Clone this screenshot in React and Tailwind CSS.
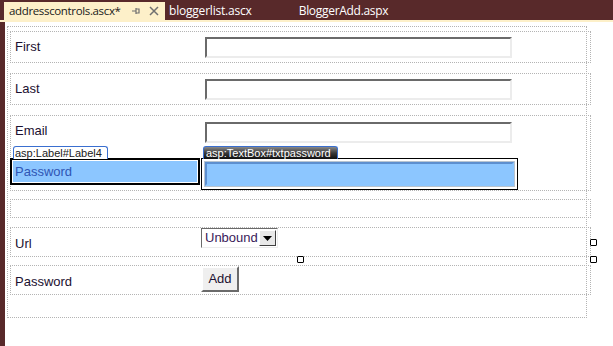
import React from "react";

const Sunken = ({ className = "" }) => (
  <div
    className={`h-[21px] w-[307px] border-2 border-t-[#6a6a6a] border-l-[#6a6a6a] border-b-[#ececec] border-r-[#ececec] bg-white ${className}`}
  />
);

const Handle = ({ className }) => (
  <div className={`absolute h-[7px] w-[7px] rounded-[1px] border border-black bg-white ${className}`} />
);

export default function App() {
  return (
    <div
      className="flex h-[346px] w-[613px] flex-col overflow-hidden bg-white text-[13px] text-[#1b1030]"
      style={{ fontFamily: '"Liberation Sans", Arial, sans-serif' }}
    >
      {/* Tabs */}
      <div className="flex h-[20px] shrink-0 items-end bg-[#58292a] text-[12px]" style={{ fontFamily: '"Open Sans", "Liberation Sans", sans-serif' }}>
        <div className="ml-[4px] flex h-[18px] w-[161px] items-center bg-[#fdf0c9] pl-[5px] text-[#1a1a1a]">
          <span className="text-[11.5px] tracking-[-0.35px]">addresscontrols.ascx*</span>
          <svg width="10" height="10" viewBox="0 0 10 10" className="ml-[10px]">
            <path d="M1 5h4M5 2v6M5 3h3v4H5M8 3v4" stroke="#707070" strokeWidth="1.2" fill="none" />
          </svg>
          <svg width="10" height="10" viewBox="0 0 10 10" className="ml-[8px]">
            <path d="M1 1l8 8M9 1l-8 8" stroke="#707070" strokeWidth="1.5" />
          </svg>
        </div>
        <div className="flex h-[18px] items-center pl-[4px] text-white tracking-[-0.2px]">bloggerlist.ascx</div>
        <div className="flex h-[18px] items-center pl-[47px] text-white tracking-[-0.3px]">BloggerAdd.aspx</div>
      </div>
      <div className="h-[2px] shrink-0 bg-[#fdf0c9]" />

      <div className="flex flex-1">
        <div className="w-[5px] shrink-0 bg-[#58292a]" />
        <div className="relative flex-1 pl-[2px] pt-[4px]">
          {/* outer table */}
          <div className="h-[292px] w-[580px] border border-dotted border-[#b4b4b4] pl-[2px] pt-[4px]">
            {/* First */}
            <div className="flex h-[32px] w-[581px] items-center border border-dotted border-[#b4b4b4]">
              <span className="w-[194px] pl-[4px]">First</span>
              <Sunken className="mt-[1px]" />
            </div>
            {/* Last */}
            <div className="mt-[10px] flex h-[32px] w-[581px] items-center border border-dotted border-[#b4b4b4]">
              <span className="w-[194px] pl-[4px]">Last</span>
              <Sunken className="mt-0" />
            </div>
            {/* Email + Password */}
            <div className="relative mt-[10px] h-[76px] w-[581px] border border-dotted border-[#b4b4b4]">
              <div className="flex h-[30px] items-center">
                <span className="w-[194px] pl-[4px]">Email</span>
                <Sunken className="mt-[2px]" />
              </div>
              <div className="mt-[12px] flex items-start">
                <div className="-ml-px h-[27px] w-[190px] border-[2px] border-black bg-white p-px">
                  <div className="flex h-full items-center bg-[#8cc6ff] pl-[2px] text-[#2f55b4]">Password</div>
                </div>
                <div className="ml-[1px] h-[32px] w-[317px] border border-black bg-white p-[2px]">
                  <div className="h-full border border-[#b8c4d0] bg-[#8cc6ff]">
                    <div className="h-full border-2 border-t-[#5d8fcf] border-l-[#5d8fcf] border-b-[#8cc6ff] border-r-[#8cc6ff]" />
                  </div>
                </div>
              </div>
              {/* badges */}
              <div className="absolute left-[2px] top-[30px] flex h-[13px] w-[95px] items-center rounded-t-[3px] border border-b-0 border-[#3a6fd0] bg-white pl-[1px] text-[11px] leading-none text-[#202020]">
                asp:Label#Label4
              </div>
              <div className="absolute left-[192px] top-[30px] flex h-[13px] w-[135px] items-center rounded-t-[3px] border border-b-0 border-[#3a6fd0] bg-gradient-to-b from-[#8a8a8a] via-[#3a3a3a] to-[#101010] pl-[2px] text-[11px] leading-none text-white">
                asp:TextBox#txtpassword
              </div>
            </div>
            {/* empty */}
            <div className="mt-[8px] h-[19px] w-[581px] border border-dotted border-[#b4b4b4]" />
            {/* Url */}
            <div className="mt-[9px] flex h-[30px] w-[581px] items-start border border-dotted border-[#b4b4b4]">
              <span className="mt-[6px] w-[190px] pl-[4px]">Url</span>
              <div className="mt-[0px] flex h-[20px] w-[77px] items-stretch border border-t-[#6a6a6a] border-l-[#6a6a6a] border-b-[#ececec] border-r-[#ececec] bg-white">
                <span className="flex-1 pl-[3px] leading-[18px] text-[#3a1a5a]">Unbound</span>
                <div className="my-px mr-px flex w-[17px] items-center justify-center border border-t-white border-l-white border-b-[#404040] border-r-[#404040] bg-[#e8e8e8]">
                  <svg width="9" height="5" viewBox="0 0 9 5">
                    <path d="M0 0h9L4.5 5z" fill="#000" />
                  </svg>
                </div>
              </div>
            </div>
            {/* Add */}
            <div className="mt-[8px] flex h-[30px] w-[581px] items-start border border-dotted border-[#b4b4b4]">
              <span className="mt-[6px] w-[190px] pl-[4px]">Password</span>
              <button className="h-[26px] w-[38px] border-2 border-t-white border-l-white border-b-[#6a6a6a] border-r-[#6a6a6a] bg-[#efefef] text-[13px] text-[#1b1030]">
                Add
              </button>
            </div>
          </div>

          <Handle className="left-[292px] top-[234px]" />
          <Handle className="left-[585px] top-[217px]" />
          <Handle className="left-[585px] top-[234px]" />
        </div>
      </div>
    </div>
  );
}
